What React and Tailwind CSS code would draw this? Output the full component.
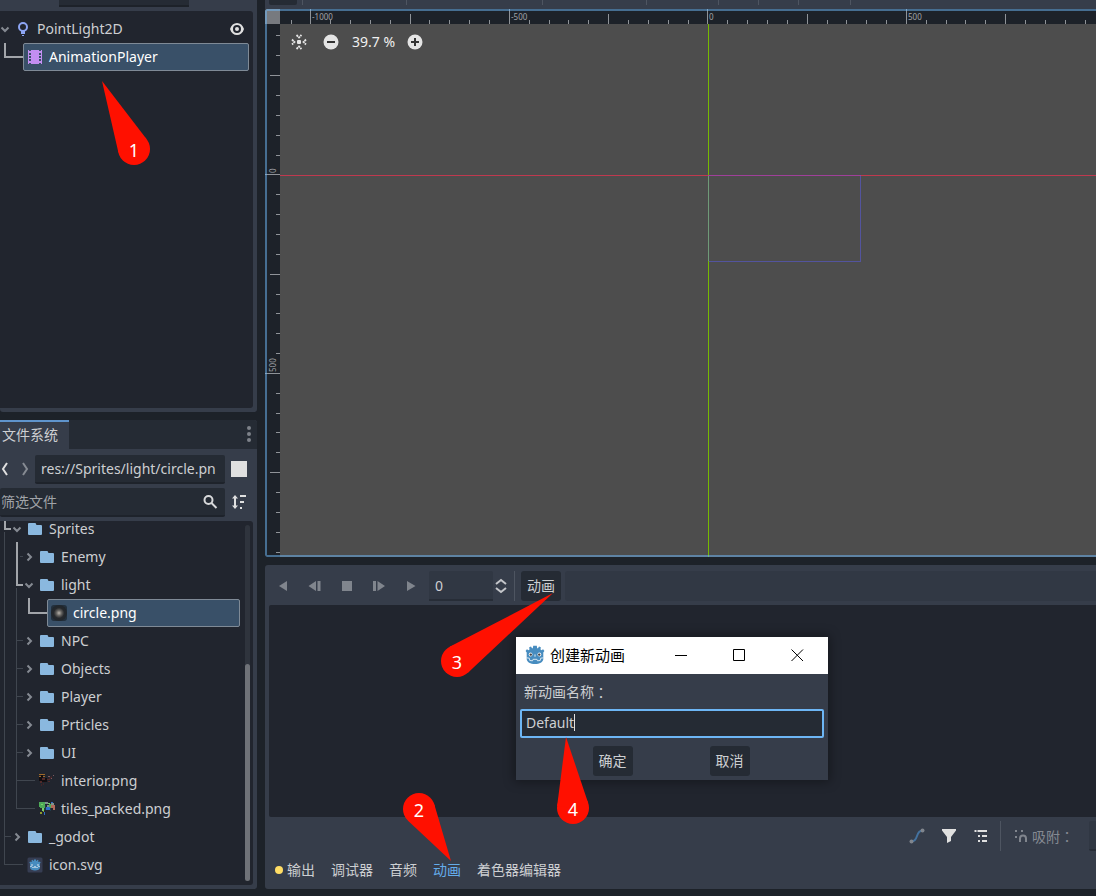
import React, { useEffect, useRef, useState } from "react";

/* ---------- icons ---------- */

const Chevron = ({ open }) => (
  <svg viewBox="0 0 12 12" className="h-3 w-3 shrink-0" fill="none" stroke="#858a92" strokeWidth="2">
    {open ? <path d="M2.500 4.500 6 8l3.500-3.500" /> : <path d="M4.500 2.500 8 6 4.500 9.500" />}
  </svg>
);

const FolderIcon = () => (
  <svg viewBox="0 0 16 16" className="h-4 w-4 shrink-0" fill="#8ab8df">
    <path d="M2 2a1 1 0 0 0-1 1v10a1 1 0 0 0 1 1h12a1 1 0 0 0 1-1V5a1 1 0 0 0-1-1h-4a1 1 0 0 1-1-1 1 1 0 0 0-1-1z" />
  </svg>
);

const BulbIcon = () => (
  <svg viewBox="0 0 16 16" className="h-4 w-4 shrink-0">
    <circle cx="8" cy="6" r="4" fill="none" stroke="#8da5f3" strokeWidth="2" />
    <path d="M6 9.500h4V13H6zM7 14h2v1H7z" fill="#8da5f3" />
  </svg>
);

const FilmIcon = () => (
  <svg viewBox="0 0 16 16" className="h-4 w-4 shrink-0" fill="#c38ef1">
    <path d="M1 1h1v1h2V1h8v1h2V1h1v14h-1v-1h-2v1H4v-1H2v1H1zM2 4v2h2V4zm10 0v2h2V4zM2 7v2h2V7zm10 0v2h2V7zM2 10v2h2v-2zm10 0v2h2v-2z" fillRule="evenodd" />
  </svg>
);

const EyeIcon = () => (
  <svg viewBox="0 0 16 16" className="h-4 w-4 shrink-0">
    <path d="M8 2C4.800 2 2.200 4 1 8c1.200 4 3.800 6 7 6s5.800-2 7-6c-1.200-4-3.800-6-7-6zm0 2a4 4 0 1 1 0 8 4 4 0 0 1 0-8z" fill="#e0e0e0" fillRule="evenodd" />
    <circle cx="8" cy="8" r="2" fill="#e0e0e0" />
  </svg>
);

const GlowIcon = () => (
  <svg viewBox="0 0 16 16" className="h-4 w-4 shrink-0">
    <defs>
      <radialGradient id="glow">
        <stop offset="0" stopColor="#b9b4ac" />
        <stop offset="0.35" stopColor="#5f5e5c" />
        <stop offset="0.65" stopColor="#25282c" />
        <stop offset="1" stopColor="#20262c" />
      </radialGradient>
    </defs>
    <rect width="16" height="16" rx="3" fill="#23303d" />
    <circle cx="8" cy="8" r="8" fill="url(#glow)" />
  </svg>
);

const InteriorIcon = () => (
  <svg viewBox="0 0 16 16" className="h-4 w-4 shrink-0" shapeRendering="crispEdges">
    <path d="M0 1h6v1H0zM0 3h2v1H0zM4 3h2v1H4z" fill="#a06a2a" />
    <path d="M2 2h2v3H2zM0 4h3v4H0zM6 5h2v3H6zM3 7h5v2H3z" fill="#120d10" />
    <path d="M3 5h3v2H3zM1 8h2v2H1zM8 6h3v1H8zM9 8h2v1H9z" fill="#512a2a" />
    <path d="M9 3h2v1H9zM12 5h1v1h-1zM14 2h1v1h-1z" fill="#7a5a60" />
    <path d="M10 4h2v2h-2zM2 11h1v2H2zM4 10h1v2H4zM12 3h1v2h-1z" fill="#402428" />
  </svg>
);

const TilesIcon = () => (
  <svg viewBox="0 0 16 16" className="h-4 w-4 shrink-0" shapeRendering="crispEdges">
    <path d="M0 1h6v6H1V6H0zM10 3h2v4h-2z" fill="#4ea957" />
    <path d="M6 1h3v2H6zM12 2h3v2h-3zM8 4h2v2H8z" fill="#7f918e" />
    <path d="M12 4h4v5h-2V7h-2z" fill="#b06a5a" />
    <path d="M7 6h4v3H7zM5 11h1v3H5zM12 1h2v1h-2z" fill="#2f6fc4" />
    <path d="M3 7h2v3H3zM2 3h2v1H2zM9 2h2v1H9z" fill="#79d06a" />
    <path d="M1 11h2v2H1zM4 10h1v1H4z" fill="#8d9a2c" />
    <path d="M6 4h1v3H6zM11 7h1v3h-1zM5 7h2v2H5z" fill="#1f3a48" />
  </svg>
);

const HEAD =
  "M4.200 2.200 6 1.400l1 1.900h.8L8.200.700h3.600l.4 2.600h.8l1-1.900 1.800.800-.3 2.300.9.700 1.700-1 1.300 1.700-1.100 1.500V14c0 3-3.800 5-8.300 5s-8.300-2-8.300-5V7.400L.600 5.900l1.300-1.700 1.700 1 .9-.7z";

const GodotIcon = () => (
  <svg viewBox="0 0 20 20" className="h-5 w-5">
    <path d={HEAD} fill="#478cbf" />
    <path
      d="M1.500 12.800l2.800.4.500 2.300 2.700.3.600-1.500h3.800l.6 1.500 2.700-.3.500-2.300 2.800-.4"
      fill="none"
      stroke="#e6eff6"
      strokeWidth=".9"
    />
    <circle cx="5.600" cy="9.500" r="1.900" fill="#f2f6fa" />
    <circle cx="14.400" cy="9.500" r="1.900" fill="#f2f6fa" />
    <circle cx="5.800" cy="9.600" r="1.200" fill="#414042" />
    <circle cx="14.200" cy="9.600" r="1.200" fill="#414042" />
    <rect x="9.500" y="9.200" width="1" height="2.600" rx=".5" fill="#e6eff6" />
  </svg>
);

const GodotFileIcon = () => (
  <svg viewBox="0 0 16 16" className="h-4 w-4 shrink-0">
    <rect x=".5" y=".5" width="15" height="15" rx="1.500" fill="#363d52" />
    <svg x="2" y="2" width="12" height="12" viewBox="0 0 20 20">
      <path d={HEAD} fill="#478cbf" />
    </svg>
    <path d="M4 7h2v2H4zM10 7h2v2h-2z" fill="#8fb6d4" />
    <path d="M3.500 9h1v1h-1zM5.500 10h1v1h-1zM7.500 9h1v2h-1zM9.500 10h1v1h-1zM11.500 9h1v1h-1z" fill="#fff" />
  </svg>
);

const SortIcon = () => (
  <svg viewBox="0 0 16 16" className="h-4 w-4" fill="#e0e0e0">
    <path d="M4 1 1 4.500h2v7H1L4 15l3-3.500H5v-7h2zM9 1h6v2H9zM9 7h4v2H9zM9 13h2v2H9z" />
  </svg>
);

/* ---------- trees ---------- */

const indent = ["pl-0", "pl-[11px]", "pl-[23px]", "pl-[35px]"];

function TreeRow({ level, open, icon, label, selected, trailing }) {
  return (
    <li className={`relative flex h-7 items-center ${indent[level]}`}>
      <span className={level === 0 ? "-ml-px flex w-3 shrink-0" : "flex w-3 shrink-0"}>
        {open !== undefined && <Chevron open={open} />}
      </span>
      <div
        className={
          selected
            ? "flex h-full min-w-0 flex-1 items-center gap-1.5 rounded-[2px] border border-[#7f8a96] bg-[#395068] pl-[3px] text-white"
            : "flex h-full min-w-0 flex-1 items-center gap-1.5 pl-1"
        }
      >
        {icon}
        <span className="whitespace-nowrap">{label}</span>
        {trailing}
      </div>
    </li>
  );
}

const files = [
  { level: 1, open: true, label: "Sprites", icon: <FolderIcon /> },
  { level: 2, open: false, label: "Enemy", icon: <FolderIcon /> },
  { level: 2, open: true, label: "light", icon: <FolderIcon /> },
  { level: 3, label: "circle.png", icon: <GlowIcon />, selected: true },
  { level: 2, open: false, label: "NPC", icon: <FolderIcon /> },
  { level: 2, open: false, label: "Objects", icon: <FolderIcon /> },
  { level: 2, open: false, label: "Player", icon: <FolderIcon /> },
  { level: 2, open: false, label: "Prticles", icon: <FolderIcon /> },
  { level: 2, open: false, label: "UI", icon: <FolderIcon /> },
  { level: 2, label: "interior.png", icon: <InteriorIcon /> },
  { level: 2, label: "tiles_packed.png", icon: <TilesIcon /> },
  { level: 1, open: false, label: "_godot", icon: <FolderIcon /> },
  { level: 1, label: "icon.svg", icon: <GodotFileIcon /> },
];

/* ---------- annotation markers ---------- */

function Callout({ n, tip, center }) {
  const r = 16;
  const dx = tip[0] - center[0];
  const dy = tip[1] - center[1];
  const base = Math.atan2(dy, dx);
  const spread = Math.acos(r / Math.hypot(dx, dy));
  const at = (a) => `${center[0] + r * Math.cos(a)},${center[1] + r * Math.sin(a)}`;
  return (
    <g>
      <g fill="#ff1000">
        <circle cx={center[0]} cy={center[1]} r={r} />
        <polygon points={`${tip[0]},${tip[1]} ${at(base - spread)} ${center[0]},${center[1]} ${at(base + spread)}`} />
      </g>
      <text x={center[0]} y={center[1] + 8} fill="#fff" fontSize="18" textAnchor="middle">
        {n}
      </text>
    </g>
  );
}

/* ---------- left side ---------- */

function SceneDock() {
  return (
    <section className="flex flex-1 flex-col rounded-b-[3px] bg-[#363d4a] pr-1 pb-1">
      <div className="flex h-[11px] items-start pl-[59px]">
        <div className="h-[7px] w-[130px] border-b-2 border-[#1d2229] bg-[#252b34]" />
      </div>
      <div className="relative flex-1 rounded-r-[3px] bg-[#21252e] pt-1 pr-1">
        <svg className="absolute top-0 left-0 h-full w-full" fill="#a2a5aa">
          <path d="M4 32h2v13h17v2H4z" />
        </svg>
        <ul>
          <TreeRow
            level={0}
            open
            icon={<BulbIcon />}
            label="PointLight2D"
            trailing={
              <button type="button" aria-label="可见性" className="mr-1 ml-auto">
                <EyeIcon />
              </button>
            }
          />
          <TreeRow level={1} icon={<FilmIcon />} label="AnimationPlayer" selected />
        </ul>
        <svg className="pointer-events-none absolute top-0 left-0 h-full w-full">
          <Callout n="1" tip={[102, 70]} center={[134, 138]} />
        </svg>
      </div>
    </section>
  );
}

function FileDock() {
  return (
    <section className="rounded-r-[3px] bg-[#363d4a] pb-1">
      <div className="flex h-[29px] items-stretch justify-between rounded-tr-[3px] bg-[#252b34]">
        <button type="button" className="w-[69px] border-t-2 border-[#5f94cc] bg-[#363d4a] pb-0.5 pl-0.5 text-left">
          文件系统
        </button>
        <button type="button" aria-label="更多" className="flex w-4 items-center justify-center pb-0.5">
          <svg viewBox="0 0 4 16" className="h-4 w-1" fill="#7e828a">
            <circle cx="2" cy="2" r="2" />
            <circle cx="2" cy="8" r="2" />
            <circle cx="2" cy="14" r="2" />
          </svg>
        </button>
      </div>
      <div className="flex items-center pt-1.5">
        <button type="button" aria-label="后退" className="w-[15px] pb-0.5">
          <svg viewBox="0 0 15 16" className="h-4 w-[15px]" fill="none" stroke="#e0e0e0" strokeWidth="2">
            <path d="M7 2 3 8l4 6" />
          </svg>
        </button>
        <button type="button" aria-label="前进" className="w-5 pb-0.5">
          <svg viewBox="0 0 20 16" className="h-4 w-5" fill="none" stroke="#868b93" strokeWidth="2">
            <path d="m8 2 4 6-4 6" />
          </svg>
        </button>
        <input
          aria-label="路径"
          defaultValue="res://Sprites/light/circle.pn"
          className="h-[29px] w-0 flex-1 rounded-[2px] border-b-2 border-[#1e232b] bg-[#252b34] pl-1.5 outline-none"
        />
        <button type="button" aria-label="切换分割模式" className="flex w-8 justify-start pb-0.5 pl-1.5">
          <span className="h-4 w-4 bg-[#e0e0e0]" />
        </button>
      </div>
      <div className="flex items-center pt-1 pb-1">
        <div className="flex h-[29px] flex-1 items-center rounded-[2px] border-b-2 border-[#1e232b] bg-[#252b34] pr-[7px]">
          <input
            aria-label="筛选文件"
            placeholder="筛选文件"
            className="h-full w-0 flex-1 bg-transparent pl-px outline-none placeholder:text-[#a0a3a8]"
          />
          <svg viewBox="0 0 16 16" className="h-4 w-4" fill="none" stroke="#d8d9db" strokeWidth="2">
            <circle cx="6.500" cy="6" r="4" />
            <path d="m9.500 9 5 5" />
          </svg>
        </div>
        <button type="button" aria-label="排序" className="w-8 pb-0.5 pl-1.5">
          <SortIcon />
        </button>
      </div>
      <div className="relative mr-1 flex overflow-hidden rounded-r-[3px] bg-[#21252e] pb-1.5">
        <svg className="absolute top-0 left-0 h-full w-full" shapeRendering="crispEdges">
          <path
            d="M4.500 11v332.500H23M4.500 315.500H11M16.500 67v220.500H35M20 35.500h3M16.500 119.500H23M16.500 147.500H23M16.500 175.500H23M16.500 203.500H23M16.500 231.500H23M16.500 259.500H35"
            fill="none"
            stroke="#40464f"
          />
          <path d="M4 0h2v7h5v2H4zM16 21h2v42h5v2h-7zM28 77h2v14h17v2H28z" fill="#a2a5aa" />
        </svg>
        <ul className="-mt-1.5 min-w-0 flex-1">
          {files.map((f) => (
            <TreeRow key={f.label} {...f} />
          ))}
        </ul>
        <div className="mt-1 mr-[3px] -mb-0.5 ml-[5px] flex w-[5px] flex-col justify-end rounded-full bg-[#2f343d]">
          <div className="h-[61%] rounded-full bg-[#6f7278]" />
        </div>
      </div>
    </section>
  );
}

/* ---------- viewport ---------- */

const STEP = 19.85;
const steps = Array.from({ length: 225 }, (_, i) => i - 25);

function Ruler({ origin, vertical, length, from }) {
  return steps.map((k) => {
    const p = Math.floor(origin + k * STEP);
    if (p < from || p >= length) return null;
    const start = k % 10 === 0 ? 0 : k % 5 === 0 ? 5 : 11;
    const size = 15 - start;
    return (
      <g key={k} fill="#8f9398">
        {vertical ? <rect x={start} y={p} width={size} height="1" /> : <rect x={p} y={start} width="1" height={size} />}
        {k % 10 === 0 && (
          <text fontSize="8" fill="#a0a3a8" transform={vertical ? `translate(11 ${p - 1}) rotate(-90)` : `translate(${p + 2} 11)`}>
            {k * 50}
          </text>
        )}
      </g>
    );
  });
}

function Viewport() {
  const ref = useRef(null);
  const [size, setSize] = useState({ width: 0, height: 0 });
  useEffect(() => {
    const measure = () => setSize({ width: ref.current.clientWidth, height: ref.current.clientHeight });
    measure();
    window.addEventListener("resize", measure);
    return () => window.removeEventListener("resize", measure);
  }, []);

  return (
    <div
      ref={ref}
      className="relative grid min-h-0 flex-1 grid-cols-[15px_1fr] grid-rows-[15px_1fr] overflow-hidden rounded-l-[2px] bg-[#1d2229]"
    >
      <svg className="col-span-2 h-[15px] w-full">
        <Ruler origin={442.9} length={size.width} from={15} />
        <rect width="15" height="15" fill="#777a7f" />
      </svg>
      <svg className="h-full w-[15px]">
        <Ruler origin={150.9} length={size.height - 15} from={0} vertical />
      </svg>
      <div className="relative bg-[#4d4d4d]">
        <svg className="absolute inset-0 h-full w-full" shapeRendering="crispEdges">
          <rect x="428" y="0" width="1" height="100%" fill="#76b900" />
          <rect x="0" y="151" width="100%" height="1" fill="#c0394f" />
          <rect x="428" y="151" width="153" height="1" fill="#a0409a" />
          <rect x="428" y="152" width="1" height="85" fill="#6f9a78" />
          <rect x="580" y="152" width="1" height="86" fill="#53549e" />
          <rect x="429" y="237" width="152" height="1" fill="#53549e" />
        </svg>
        <div className="relative flex items-center pt-2 pl-[11px] text-[#f0f0f0]">
          <button type="button" aria-label="居中视图" className="mr-4">
            <svg viewBox="0 0 16 16" className="h-4 w-4" fill="none" stroke="#e4e4e4" strokeWidth="2">
              <rect x="6" y="6" width="4" height="4" rx="1" fill="#e4e4e4" stroke="none" />
              <path
                d="M5.500 1 8 3.500 10.500 1M5.500 15 8 12.500l2.500 2.500M1 5.500 3.500 8 1 10.500M15 5.500 12.500 8l2.500 2.500"
                strokeWidth="1.800"
                strokeDasharray="2.200 .5"
              />
            </svg>
          </button>
          <button type="button" aria-label="缩小">
            <svg viewBox="0 0 16 16" className="h-4 w-4">
              <circle cx="8" cy="8" r="7.500" fill="#e4e4e4" />
              <path d="M4 7h8v2H4z" fill="#333" />
            </svg>
          </button>
          <button type="button" className="pr-3 pl-[13px]">
            39.7 %
          </button>
          <button type="button" aria-label="放大">
            <svg viewBox="0 0 16 16" className="h-4 w-4">
              <circle cx="8" cy="8" r="7.500" fill="#e4e4e4" />
              <path d="M4 7h3V4h2v3h3v2H9v3H7V9H4z" fill="#333" />
            </svg>
          </button>
        </div>
      </div>
      <div className="pointer-events-none absolute inset-0 rounded-l-[2px] border-2 border-r-0 border-[#70bafa]/50" />
    </div>
  );
}

/* ---------- animation panel ---------- */

const transport = [
  ["反向播放", "M12 3v10L4 8z"],
  ["从当前反向播放", "M9 3v10L1.500 8zM10.500 3h3v10h-3z"],
  ["停止", "M3 3h10v10H3z"],
  ["从头播放", "M2 3h3v10H2zM6.500 3v10L14 8z"],
  ["播放", "M4 3v10l8.500-5z"],
];

function Dialog() {
  return (
    <div
      role="dialog"
      aria-label="创建新动画"
      className="absolute top-[72px] left-[251px] w-[312px] bg-[#363d4a] pb-1 shadow-[0_0_10px_2px_rgba(0,0,0,0.35)]"
    >
      <header className="flex h-[37px] items-center bg-white pr-0.5 pb-0.5 pl-[9px] text-black">
        <GodotIcon />
        <h2 className="ml-[5px] text-[15px]">创建新动画</h2>
        <div className="ml-auto flex">
          {[
            ["最小化", "M0 6.500h12"],
            ["最大化", "M.500.500h11v11H.500z"],
            ["关闭", "m.500.500 11.500 11.500M12 .500.500 12"],
          ].map(([name, d]) => (
            <button key={name} type="button" aria-label={name} className="flex w-[58px] justify-center">
              <svg viewBox="0 0 12 12" className="h-3 w-3 overflow-visible" fill="none" stroke="#000">
                <path d={d} />
              </svg>
            </button>
          ))}
        </div>
      </header>
      <div className="px-1">
        <label htmlFor="anim-name" className="flex h-[35px] items-center pl-1">
          新动画名称
          <span className="font-['Noto_Sans_CJK_TC',sans-serif]" lang="zh-TW">：</span>
        </label>
        <div className="relative">
          <input
            id="anim-name"
            defaultValue="Default"
            className="block h-[29px] w-full rounded-[2px] border-2 border-[#6db6f5] bg-[#252b34] pb-0.5 pl-1 outline-none"
          />
          <span className="absolute top-[5px] left-[54px] h-[17px] w-px bg-[#e0e0e0]" />
        </div>
        <div className="mt-2 flex justify-center gap-[77px] pr-0.5">
          <button type="button" className="h-[30px] w-10 rounded-[3px] bg-[#252b34]">
            确定
          </button>
          <button type="button" className="h-[30px] w-10 rounded-[3px] bg-[#252b34]">
            取消
          </button>
        </div>
      </div>
    </div>
  );
}

function AnimationPanel() {
  return (
    <section className="relative rounded-l-[3px] bg-[#363d4a] pt-1.5">
      <div className="flex h-[30px] items-center pl-0.5">
        {transport.map(([name, d]) => (
          <button key={name} type="button" aria-label={name} className="flex w-8 justify-center">
            <svg viewBox="0 0 16 16" className="h-4 w-4" fill="#80858d">
              <path d={d} />
            </svg>
          </button>
        ))}
        <input
          aria-label="时间"
          defaultValue="0"
          className="ml-0.5 h-full w-16 rounded-t-[2px] border-b-2 border-[#272d37] bg-[#303743] pl-1.5 outline-none"
        />
        <svg viewBox="0 0 16 16" className="h-4 w-4" fill="none" stroke="#c4c6ca" strokeWidth="2">
          <path d="m3 6 5-4 5 4M3 10l5 4 5-4" />
        </svg>
        <span className="ml-[5px] h-full w-px bg-[#4e5561]" />
        <button type="button" className="ml-1.5 h-full w-10 rounded-[3px] bg-[#252b34]">
          动画
        </button>
        <div className="ml-1 h-full flex-1 rounded-l-[3px] bg-[#313844]" />
      </div>
      <div className="mt-1 ml-1 h-[212px] rounded-l-[2px] bg-[#21252e]" />
      <div className="mt-1 flex h-[30px] items-center justify-end">
        <button type="button" aria-label="贝塞尔编辑器" className="w-8">
          <svg viewBox="0 0 16 16" className="h-4 w-4">
            <path d="M2.500 13.500C10 13.500 6 2.500 13.500 2.500" fill="none" stroke="#44729f" strokeWidth="2" />
            <circle cx="2.500" cy="13.500" r="2" fill="#80858d" />
            <circle cx="13.500" cy="2.500" r="2" fill="#80858d" />
          </svg>
        </button>
        <button type="button" aria-label="筛选轨道" className="w-8">
          <svg viewBox="0 0 16 16" className="h-4 w-4" fill="#e0e0e0">
            <path d="M1 1h14v1.500L10 9v4l-4 2V9L1 2.500z" />
          </svg>
        </button>
        <button type="button" aria-label="按节点分组" className="w-[27px]">
          <svg viewBox="0 0 16 16" className="h-4 w-4" fill="#e0e0e0">
            <path d="M1.500 2h2v2h-2zM4.500 2H14v2H4.500zM5 7h2v2H5zM9 7h5v2H9zM5 12h2v2H5zM9 12h5v2H9z" />
          </svg>
        </button>
        <span className="h-full w-px bg-[#4e5561]" />
        <button type="button" className="ml-[13px] flex items-center gap-0.5 text-[#858a92]">
          <svg viewBox="0 0 16 16" className="h-4 w-4">
            <path d="M1 2h2v2H1zM7 2h2v2H7zM1 8h2v2H1z" fill="#80858d" />
            <path d="M6 14v-3.500a3 3 0 0 1 6 0V14" fill="none" stroke="#80858d" strokeWidth="2" />
          </svg>
          <span>
            吸附<span className="font-['Noto_Sans_CJK_TC',sans-serif]" lang="zh-TW">：</span>
          </span>
        </button>
        <input
          aria-label="吸附间隔"
          className="ml-[15px] h-full w-[7px] rounded-l-[2px] border-b-2 border-[#272d37] bg-[#303743] outline-none"
        />
      </div>
      <nav className="mt-1 flex h-[34px] items-center gap-4 pb-1 pl-2.5">
        <button type="button" className="flex items-center gap-1">
          <span className="h-2 w-2 rounded-full bg-[#ffdd65]" />
          输出
        </button>
        <button type="button">调试器</button>
        <button type="button">音频</button>
        <button type="button" className="text-[#64acea]">
          动画
        </button>
        <button type="button">着色器编辑器</button>
      </nav>
      <Dialog />
      <svg className="pointer-events-none absolute inset-0 h-full w-full">
        <Callout n="2" tip={[186, 296]} center={[154, 244]} />
        <Callout n="3" tip={[288, 28]} center={[192, 96]} />
        <Callout n="4" tip={[301, 172]} center={[308, 243]} />
      </svg>
    </section>
  );
}

export default function App() {
  return (
    <div className="flex h-screen gap-2 overflow-hidden bg-[#1d2229] pb-[7px] font-['Noto_Sans','Noto_Sans_CJK_SC',sans-serif] text-[14px] leading-5 text-[#cdcfd2]">
      <aside className="flex w-[257px] shrink-0 flex-col gap-2">
        <SceneDock />
        <FileDock />
      </aside>
      <main className="flex min-w-0 flex-1 flex-col gap-2">
        <div className="flex min-h-0 flex-1 flex-col">
          <div className="flex h-[9px] shrink-0 items-start bg-[#363d4a] pl-1">
            <div className="mr-[5px] h-[5px] w-7 rounded-b-[2px] bg-[#252b34]" />
            <div className="h-[5px] w-[104px] border-l border-[#4e5561]" />
            <div className="h-[5px] w-[136px] border-l border-[#4e5561]" />
            <div className="h-[5px] w-[104px] border-l border-[#4e5561]" />
            <div className="h-[5px] w-[72px] border-l border-[#4e5561]" />
            <div className="h-[5px] w-10 border-l border-[#4e5561]" />
            <div className="h-[5px] w-10 border-l border-[#4e5561]" />
            <div className="h-[5px] w-[52px] border-l border-[#4e5561]" />
            <div className="h-[5px] flex-1 border-l border-[#4e5561]" />
          </div>
          <Viewport />
        </div>
        <AnimationPanel />
      </main>
    </div>
  );
}
